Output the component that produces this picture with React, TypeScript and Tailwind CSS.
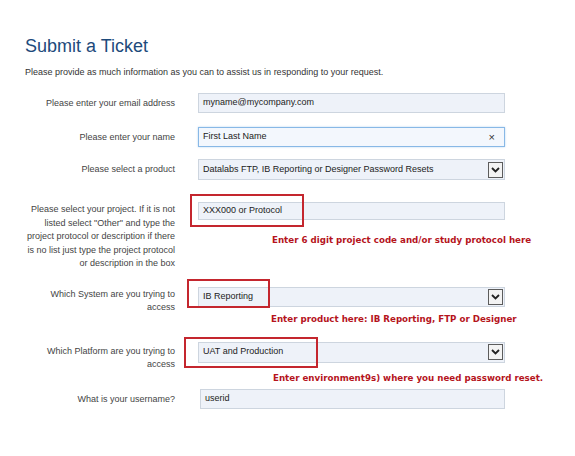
const fieldBox =
  "h-full w-full border border-[#cdd5df] bg-[#eef2f9] pl-[4px] flex items-center text-[9px] text-[#222]";

function Chevron() {
  return (
    <span className="flex h-[16px] w-[15px] items-center justify-center border border-[#5c5c5c] bg-[#f3f3f3]">
      <svg width="9" height="6" viewBox="0 0 9 6">
        <path d="M1 1 L4.5 4.5 L8 1" fill="none" stroke="#222" strokeWidth="1.8" />
      </svg>
    </span>
  );
}

function SelectBox({ value }: { value: string }) {
  return (
    <div className={fieldBox + " justify-between pr-[1px]"}>
      <span>{value}</span>
      <Chevron />
    </div>
  );
}

function Note({ text, className }: { text: string; className: string }) {
  return (
    <div
      className={
        "h-[14px] leading-[14px] text-[8.7px] font-bold text-[#b5141c] whitespace-nowrap " + className
      }
      style={{ fontFamily: '"DejaVu Sans", Verdana, sans-serif' }}
    >
      {text}
    </div>
  );
}

export default function App() {
  return (
    <div
      className="w-[575px] h-[456px] bg-white pl-[25px] pt-[34px] text-[#444]"
      style={{ fontFamily: '"Liberation Sans", Arial, sans-serif' }}
    >
      <h1 className="h-[24px] leading-[24px] text-[18px] text-[#1d4a7b]">Submit a Ticket</h1>
      <p className="mt-[7px] h-[14px] leading-[14px] text-[9px] text-[#333]">
        Please provide as much information as you can to assist us in responding to your request.
      </p>

      {/* email */}
      <div className="mt-[14px] flex h-[20px]">
        <div className="w-[150px] text-right text-[9px] leading-[20px]">Please enter your email address</div>
        <div className="ml-[23px] h-[20px] w-[307px]">
          <div className={fieldBox}>myname@mycompany.com</div>
        </div>
      </div>

      {/* name */}
      <div className="mt-[14px] flex h-[20px]">
        <div className="w-[150px] text-right text-[9px] leading-[20px]">Please enter your name</div>
        <div className="ml-[23px] h-[20px] w-[307px]">
          <div className="h-full w-full border border-[#88b8e6] bg-[#f3f7fd] pl-[4px] pr-[9px] flex items-center justify-between text-[9px] text-[#222] shadow-[0_0_2px_#b9d6f2]">
            <span>First Last Name</span>
            <span className="text-[11px] leading-none text-[#333]">×</span>
          </div>
        </div>
      </div>

      {/* product */}
      <div className="mt-[12px] flex h-[21px]">
        <div className="w-[150px] text-right text-[9px] leading-[21px]">Please select a product</div>
        <div className="ml-[23px] h-[21px] w-[307px]">
          <SelectBox value="Datalabs FTP, IB Reporting or Designer Password Resets" />
        </div>
      </div>

      {/* project */}
      <div className="mt-[22px] flex">
        <div className="w-[150px] pt-[1px] text-right text-[9px] leading-[13.5px]">
          Please select your project. If it is not listed select "Other" and type the project protocol or
          description if there is no list just type the project protocol or description in the box
        </div>
        <div className="ml-[23px] w-[307px]">
          <div className="relative h-[18px]">
            <div className={fieldBox}>XXX000 or Protocol</div>
            <div className="absolute left-[-8px] top-[-8px] h-[33px] w-[114px] border-2 border-[#c4262e]" />
          </div>
          <Note text="Enter 6 digit project code and/or study protocol here" className="mt-[13px] ml-[74px]" />
        </div>
      </div>

      {/* system */}
      <div className="mt-[16px] flex">
        <div className="w-[150px] pt-[1px] text-right text-[9px] leading-[13.5px]">
          Which System are you trying to access
        </div>
        <div className="ml-[23px] w-[307px]">
          <div className="relative h-[20px]">
            <SelectBox value="IB Reporting" />
            <div className="absolute left-[-11px] top-[-8px] h-[29px] w-[83px] border-2 border-[#c4262e]" />
          </div>
          <Note text="Enter product here: IB Reporting, FTP or Designer" className="mt-[5px] ml-[73px]" />
        </div>
      </div>

      {/* platform */}
      <div className="mt-[16px] flex">
        <div className="w-[150px] pt-[3px] text-right text-[9px] leading-[13.5px]">
          Which Platform are you trying to access
        </div>
        <div className="ml-[23px] w-[307px]">
          <div className="relative h-[21px]">
            <SelectBox value="UAT and Production" />
            <div className="absolute left-[-14px] top-[-5px] h-[31px] w-[134px] border-2 border-[#c4262e]" />
          </div>
          <Note text="Enter environment9s) where you need password reset." className="mt-[8px] ml-[75px]" />
        </div>
      </div>

      {/* username */}
      <div className="mt-[4px] flex h-[20px]">
        <div className="w-[150px] text-right text-[9px] leading-[20px]">What is your username?</div>
        <div className="ml-[25px] h-[20px] w-[305px]">
          <div className={fieldBox}>userid</div>
        </div>
      </div>
    </div>
  );
}
